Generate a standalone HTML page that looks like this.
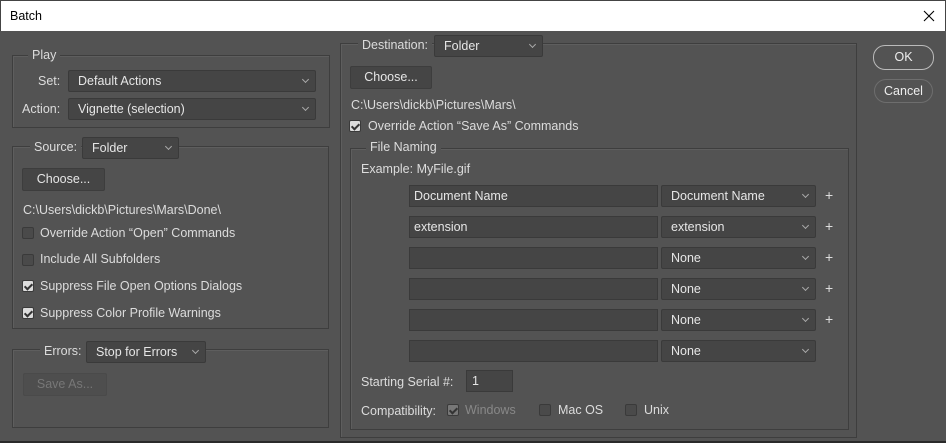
<!DOCTYPE html>
<html><head><meta charset="utf-8"><style>
*{box-sizing:border-box}
body{margin:0;width:946px;height:443px;overflow:hidden;background:#535353;font-family:"Liberation Sans",sans-serif;font-size:12px;color:#dcdcdc;position:relative}
.a{position:absolute}
.title{left:0;top:0;width:946px;height:31px;background:#fff;color:#000;border:1px solid #444;border-bottom:none}
.grp{position:absolute;border:1px solid #3e3e3e;box-shadow:1px 1px 0 #5e5e5e inset}
.leg{position:absolute;background:#535353;padding:0 4px;white-space:nowrap}
.sel{position:absolute;background:#454545;border:1px solid #3a3a3a;border-radius:2px;height:22px;line-height:20px;padding-left:9px;color:#e6e6e6;font-size:12.5px}
.sel:after{content:"";position:absolute;right:7px;top:6px;width:4px;height:4px;border-right:1px solid #aaa;border-bottom:1px solid #aaa;transform:rotate(45deg)}
.inp{position:absolute;background:#454545;border:1px solid #3a3a3a;height:22px;line-height:20px;padding-left:4px;color:#e6e6e6;font-size:12.5px}
.btn{position:absolute;background:#454545;border:1px solid #3d3d3d;border-radius:2px;height:23px;line-height:21px;text-align:center;font-size:12.5px;color:#e6e6e6}
.cb{position:absolute;width:12px;height:12px;border:1px solid #3a3a3a;background:#4a4a4a;border-radius:2px}
.cb.on{background:#dcdcdc}
.cb.on:after{content:"";position:absolute;left:3px;top:1px;width:3px;height:6px;border-right:2px solid #333;border-bottom:2px solid #333;transform:rotate(45deg)}
.t{position:absolute;white-space:nowrap;font-size:12.5px}
.plus{position:absolute;color:#ddd;font-size:14px}
.pill{position:absolute;border:1px solid #bbb;border-radius:12px;text-align:center;font-size:12.5px;color:#eee}
</style></head><body>
<div class="a title"><span style="position:absolute;left:9px;top:8px;font-size:12.5px">Batch</span>
<svg style="position:absolute;left:922px;top:9px" width="12" height="12"><path d="M1 1L11 11M11 1L1 11" stroke="#000" stroke-width="1.1"/></svg></div>
<div class="a" style="left:0;top:441px;width:946px;height:2px;background:#2a2a2a"></div>

<div class="grp" style="left:12px;top:55px;width:318px;height:73px"></div>
<div class="leg t" style="left:28px;top:48px">Play</div>
<div class="t" style="left:38px;top:74px">Set:</div>
<div class="sel" style="left:68px;top:70px;width:248px">Default Actions</div>
<div class="t" style="left:22px;top:102px">Action:</div>
<div class="sel" style="left:68px;top:98px;width:248px">Vignette (selection)</div>

<div class="grp" style="left:12px;top:146px;width:317px;height:183px"></div>
<div class="leg t" style="left:30px;top:140px">Source:</div>
<div class="sel" style="left:82px;top:137px;width:97px">Folder</div>
<div class="btn" style="left:22px;top:168px;width:83px">Choose...</div>
<div class="t" style="left:23px;top:203px">C:\Users\dickb\Pictures\Mars\Done\</div>
<div class="cb" style="left:22px;top:227px"></div><div class="t" style="left:40px;top:226px">Override Action “Open” Commands</div>
<div class="cb" style="left:22px;top:254px"></div><div class="t" style="left:40px;top:252px">Include All Subfolders</div>
<div class="cb on" style="left:22px;top:280px"></div><div class="t" style="left:40px;top:279px">Suppress File Open Options Dialogs</div>
<div class="cb on" style="left:22px;top:307px"></div><div class="t" style="left:40px;top:306px">Suppress Color Profile Warnings</div>

<div class="grp" style="left:12px;top:349px;width:317px;height:79px"></div>
<div class="leg t" style="left:40px;top:344px">Errors:</div>
<div class="sel" style="left:86px;top:341px;width:120px">Stop for Errors</div>
<div class="btn" style="left:23px;top:373px;width:84px;color:#777;background:#4e4e4e;border-color:#4a4a4a">Save As...</div>

<div class="grp" style="left:340px;top:43px;width:517px;height:395px"></div>
<div class="leg t" style="left:358px;top:38px">Destination:</div>
<div class="sel" style="left:434px;top:35px;width:109px">Folder</div>
<div class="btn" style="left:350px;top:66px;width:82px">Choose...</div>
<div class="t" style="left:351px;top:98px">C:\Users\dickb\Pictures\Mars\</div>
<div class="cb on" style="left:349px;top:120px"></div><div class="t" style="left:368px;top:119px">Override Action “Save As” Commands</div>

<div class="grp" style="left:350px;top:148px;width:499px;height:282px"></div>
<div class="leg t" style="left:366px;top:140px">File Naming</div>
<div class="t" style="left:361px;top:162px">Example: MyFile.gif</div>

<div class="inp" style="left:409px;top:185px;width:249px">Document Name</div><div class="sel" style="left:661px;top:185px;width:155px">Document Name</div><div class="plus" style="left:825px;top:187px">+</div>
<div class="inp" style="left:409px;top:216px;width:249px">extension</div><div class="sel" style="left:661px;top:216px;width:155px">extension</div><div class="plus" style="left:825px;top:218px">+</div>
<div class="inp" style="left:409px;top:247px;width:249px"></div><div class="sel" style="left:661px;top:247px;width:155px">None</div><div class="plus" style="left:825px;top:249px">+</div>
<div class="inp" style="left:409px;top:278px;width:249px"></div><div class="sel" style="left:661px;top:278px;width:155px">None</div><div class="plus" style="left:825px;top:280px">+</div>
<div class="inp" style="left:409px;top:309px;width:249px"></div><div class="sel" style="left:661px;top:309px;width:155px">None</div><div class="plus" style="left:825px;top:311px">+</div>
<div class="inp" style="left:409px;top:340px;width:249px"></div><div class="sel" style="left:661px;top:340px;width:155px">None</div>

<div class="t" style="left:361px;top:375px">Starting Serial #:</div>
<div class="inp" style="left:466px;top:370px;width:47px;padding-left:5px">1</div>
<div class="t" style="left:361px;top:404px">Compatibility:</div>
<div class="cb on" style="left:447px;top:404px;background:#777"></div><div class="t" style="left:465px;top:403px;color:#888">Windows</div>
<div class="cb" style="left:539px;top:404px"></div><div class="t" style="left:558px;top:403px">Mac OS</div>
<div class="cb" style="left:625px;top:404px"></div><div class="t" style="left:644px;top:403px">Unix</div>

<div class="pill" style="left:873px;top:45px;width:61px;height:25px;line-height:23px">OK</div>
<div class="pill" style="left:874px;top:79px;width:59px;height:24px;line-height:22px;border-color:#6e6e6e">Cancel</div>
</body></html>
